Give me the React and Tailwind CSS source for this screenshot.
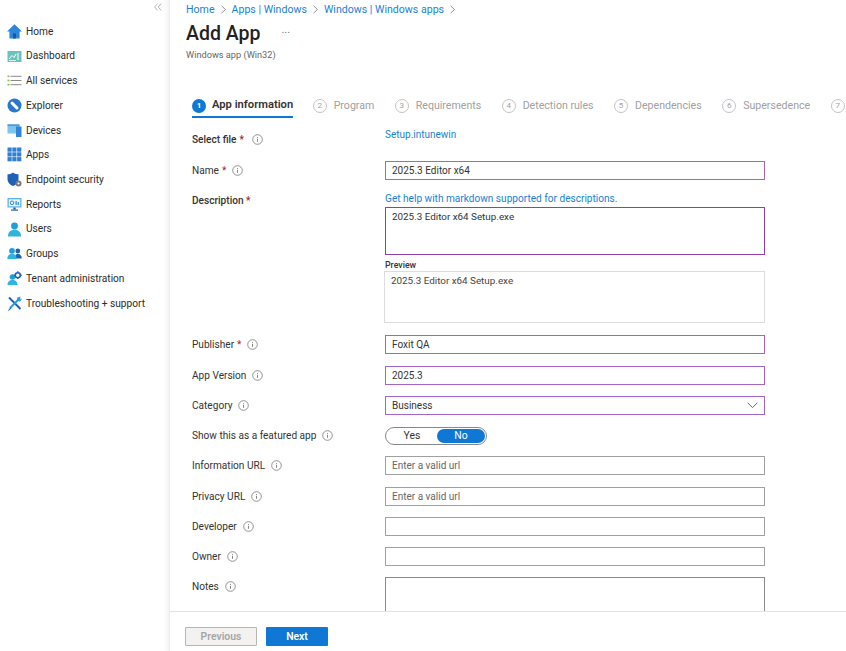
import React from 'react';

const font = { fontFamily: 'Roboto, "Open Sans", sans-serif' };

function HomeIcon() {
  return (
    <svg width="15" height="15" viewBox="0 0 15 15">
      <path d="M7.5 0.3 L0 7.6 H2.4 V14.5 H12.6 V7.6 H15 Z" fill="#2f86d8" />
      <rect x="6" y="9.5" width="3" height="5" fill="#0f5ba8" />
    </svg>
  );
}

function DashboardIcon() {
  return (
    <svg width="15" height="15" viewBox="0 0 15 15">
      <rect x="0.5" y="2" width="14" height="11" fill="#6cc3bd" />
      <path d="M2 10 L5 6.5 L7 8.5 L9 5" stroke="#fff" strokeWidth="1" fill="none" />
      <rect x="10.5" y="4" width="1" height="7" fill="#fff" />
      <rect x="2" y="11" width="7" height="0.8" fill="#fff" />
    </svg>
  );
}

function ServicesIcon() {
  return (
    <svg width="15" height="15" viewBox="0 0 15 15">
      <rect x="0.5" y="2.5" width="2" height="1.6" fill="#8cc04b" />
      <rect x="0.5" y="6.7" width="2" height="1.6" fill="#8cc04b" />
      <rect x="0.5" y="10.9" width="2" height="1.6" fill="#8cc04b" />
      <rect x="3.5" y="2.8" width="11" height="1" fill="#8a8a8a" />
      <rect x="3.5" y="7" width="11" height="1" fill="#8a8a8a" />
      <rect x="3.5" y="11.2" width="11" height="1" fill="#8a8a8a" />
    </svg>
  );
}

function ExplorerIcon() {
  return (
    <svg width="15" height="15" viewBox="0 0 15 15">
      <circle cx="7.5" cy="7.5" r="7" fill="#2b78c9" />
      <path d="M5 5 L10 10" stroke="#fff" strokeWidth="3" strokeLinecap="round" />
    </svg>
  );
}

function DevicesIcon() {
  return (
    <svg width="15" height="15" viewBox="0 0 15 15">
      <rect x="0.5" y="1.5" width="12" height="9" fill="#7fc4ee" />
      <rect x="0.5" y="1.5" width="12" height="1.2" fill="#2f86d8" />
      <rect x="9" y="3.5" width="5.5" height="10.5" fill="#2f86d8" />
    </svg>
  );
}

function AppsIcon() {
  const cells = [0.5, 5.3, 10.1];
  return (
    <svg width="15" height="15" viewBox="0 0 15 15">
      {cells.map((y) =>
        cells.map((x) => <rect key={`${x}-${y}`} x={x} y={y} width="4.2" height="4.2" fill="#2f7fd6" />)
      )}
    </svg>
  );
}

function SecurityIcon() {
  return (
    <svg width="15" height="15" viewBox="0 0 15 15">
      <path d="M6 0.5 C8 2 10 2.2 11.5 2.2 V7.5 C11.5 10.5 9 12.8 6 14 C3 12.8 0.5 10.5 0.5 7.5 V2.2 C2 2.2 4 2 6 0.5 Z" fill="#1f62b5" />
      <circle cx="11.5" cy="11.5" r="3" fill="#7a7a7a" />
      <circle cx="11.5" cy="11.5" r="1" fill="#fff" />
    </svg>
  );
}

function ReportsIcon() {
  return (
    <svg width="15" height="15" viewBox="0 0 15 15">
      <rect x="0.5" y="1" width="14" height="9.5" fill="#5bb4ea" />
      <rect x="1.8" y="2.3" width="11.4" height="7" fill="#e8f5fd" />
      <circle cx="5" cy="5.8" r="1.8" fill="none" stroke="#2f86d8" strokeWidth="1" />
      <rect x="8.5" y="4" width="1.2" height="4" fill="#2f86d8" />
      <rect x="10.6" y="5" width="1.2" height="3" fill="#2f86d8" />
      <rect x="6.3" y="10.5" width="2.4" height="2" fill="#1f62b5" />
      <rect x="4" y="12.5" width="7" height="1.2" fill="#1f62b5" />
    </svg>
  );
}

function UsersIcon() {
  return (
    <svg width="15" height="15" viewBox="0 0 15 15">
      <circle cx="7.5" cy="4" r="3.4" fill="#1f9fd8" />
      <path d="M1 14.5 C1 10 3.5 7.8 7.5 7.8 C11.5 7.8 14 10 14 14.5 Z" fill="#2fb4e0" />
    </svg>
  );
}

function GroupsIcon() {
  return (
    <svg width="15" height="15" viewBox="0 0 15 15">
      <circle cx="10.8" cy="5" r="2.4" fill="#1f62b5" />
      <path d="M7.5 12.5 C7.5 9.5 9 8 11 8 C13 8 14.8 9.5 14.8 12.5 Z" fill="#1f62b5" />
      <circle cx="5" cy="4.8" r="2.9" fill="#1f9fd8" />
      <path d="M0.3 13 C0.3 9.5 2 8 5 8 C8 8 9.7 9.5 9.7 13 Z" fill="#2fb4e0" />
    </svg>
  );
}

function TenantIcon() {
  return (
    <svg width="15" height="15" viewBox="0 0 15 15">
      <circle cx="5.5" cy="6" r="2.8" fill="#1f9fd8" />
      <path d="M0.5 14 C0.5 10.5 2.5 9 5.5 9 C8.5 9 10.5 10.5 10.5 14 Z" fill="#2fb4e0" />
      <circle cx="10.8" cy="4.2" r="2.5" fill="none" stroke="#1f62b5" strokeWidth="1.6" />
      <path d="M10.8 0.3 V1.5 M10.8 7 V8.1 M7 4.2 H8.2 M13.4 4.2 H14.7" stroke="#1f62b5" strokeWidth="1.4" />
    </svg>
  );
}

function ToolsIcon() {
  return (
    <svg width="15" height="15" viewBox="0 0 15 15">
      <path d="M2 1.5 L13.5 13" stroke="#1f62b5" strokeWidth="2" />
      <path d="M13 2 L3 12" stroke="#2f9bdc" strokeWidth="2" />
      <path d="M9.8 3 C10.2 1.2 12 0.3 13.8 0.9 L12 2.8 L13 3.8 L14.6 2.2 C15 4 13.6 5.6 11.8 5.4 Z" fill="#2f9bdc" />
      <path d="M3.5 11.3 L1 14.5 L1.8 14.8 L4.5 12.3 Z" fill="#1f62b5" />
    </svg>
  );
}

function InfoIcon({ className = 'ml-[6px]' }) {
  return (
    <svg width="11" height="11" viewBox="0 0 11 11" className={className}>
      <circle cx="5.5" cy="5.5" r="4.8" fill="none" stroke="#777" strokeWidth="0.8" />
      <rect x="5.1" y="4.8" width="0.8" height="3" fill="#666" />
      <rect x="5.1" y="3.1" width="0.8" height="0.9" fill="#666" />
    </svg>
  );
}

function Chevron() {
  return (
    <svg width="7" height="9" viewBox="0 0 7 9">
      <path d="M1.5 0.8 L5.5 4.5 L1.5 8.2" fill="none" stroke="#777" strokeWidth="0.8" />
    </svg>
  );
}

const navItems = [
  { label: 'Home', icon: <HomeIcon /> },
  { label: 'Dashboard', icon: <DashboardIcon /> },
  { label: 'All services', icon: <ServicesIcon /> },
  { label: 'Explorer', icon: <ExplorerIcon /> },
  { label: 'Devices', icon: <DevicesIcon /> },
  { label: 'Apps', icon: <AppsIcon /> },
  { label: 'Endpoint security', icon: <SecurityIcon /> },
  { label: 'Reports', icon: <ReportsIcon /> },
  { label: 'Users', icon: <UsersIcon /> },
  { label: 'Groups', icon: <GroupsIcon /> },
  { label: 'Tenant administration', icon: <TenantIcon /> },
  { label: 'Troubleshooting + support', icon: <ToolsIcon /> }
];

const steps = [
  { n: 2, label: 'Program' },
  { n: 3, label: 'Requirements' },
  { n: 4, label: 'Detection rules' },
  { n: 5, label: 'Dependencies' },
  { n: 6, label: 'Supersedence' },
  { n: 7, label: '' }
];

function Sidebar() {
  return (
    <aside className="w-[170px] shrink-0 h-full bg-white border-r border-[#ececec] shadow-[inset_-5px_0_5px_-3px_#f1f1f1]">
      <div className="h-[19px] pr-[7px] pt-[3px] flex justify-end items-start">
        <svg width="8" height="8" viewBox="0 0 8 8">
          <path d="M3.6 0.6 L0.6 4 L3.6 7.4 M7.2 0.6 L4.2 4 L7.2 7.4" fill="none" stroke="#a0a0a0" strokeWidth="0.8" />
        </svg>
      </div>
      <nav>
        {navItems.map((item) => (
          <div key={item.label} className="h-[24.73px] pl-[7px] flex items-center gap-[4px] text-[10.15px] text-[#2b2b2b] whitespace-nowrap">
            {item.icon}
            <span>{item.label}</span>
          </div>
        ))}
      </nav>
    </aside>
  );
}

function Row({ label, required, height, children }) {
  return (
    <div className={`flex items-center ${height}`}>
      <div className="w-[193px] shrink-0 flex items-center text-[10.1px] text-[#333]">
        <span>{label}</span>
        {required && <span className="text-[#a4262c] ml-[3px]">*</span>}
        <InfoIcon />
      </div>
      {children}
    </div>
  );
}

function TextBox({ value, placeholder, active }) {
  return (
    <div className={`w-[380px] h-[19px] px-[6px] flex items-center border text-[10px] ${active ? 'border-[#a565c4]' : 'border-[#a0a0a0]'} ${placeholder ? 'text-[#666]' : 'text-[#333]'}`}>
      {value || placeholder}
    </div>
  );
}

function App() {
  return (
    <div className="flex w-[846px] h-[651px] bg-white overflow-hidden" style={font}>
      <Sidebar />
      <main className="flex-1 min-w-0 flex flex-col h-full">
        <div className="pl-[16px] pt-[2px]">
          <div className="h-[15px] flex items-center gap-[5px] text-[10.6px] text-[#1b7fd6]">
            <span>Home</span>
            <Chevron />
            <span>Apps | Windows</span>
            <Chevron />
            <span>Windows | Windows apps</span>
            <Chevron />
          </div>
          <div className="h-[27px] mt-[3px] flex items-center">
            <h1 className="text-[19.5px] font-medium text-[#222]">Add App</h1>
            <span className="ml-[21px] mb-[6px] text-[11px] text-[#777]">...</span>
          </div>
          <div className="mt-[2px] text-[9.2px] leading-[12px] text-[#666]">Windows app (Win32)</div>
        </div>

        <div className="mt-[30px] ml-[22px] h-[27px] flex gap-[20.5px] overflow-hidden text-[10.6px] text-[#a0a0a0] whitespace-nowrap">
          <div className="h-full -mr-[1px] flex items-center gap-[6px] border-b-2 border-[#0f78d4] pt-[4px]">
            <span className="w-[14px] h-[14px] rounded-full bg-[#0f78d4] text-white text-[8px] font-bold flex items-center justify-center">1</span>
            <span className="text-[11.2px] font-semibold text-[#333]">App information</span>
          </div>
          {steps.map((step) => (
            <div key={step.n} className="h-full flex items-center gap-[7px] pt-[2px]">
              <span className="w-[14px] h-[14px] rounded-full border border-[#c4c4c4] text-[8px] flex items-center justify-center">{step.n}</span>
              {step.label && <span>{step.label}</span>}
            </div>
          ))}
        </div>

        <div className="flex-1 min-h-0 overflow-hidden pl-[22px] pt-[14px]">
          <div className="h-[27px] flex items-start">
            <div className="w-[193px] flex items-center text-[10.1px] font-medium text-[#333]">
              <span>Select file</span>
              <span className="text-[#a4262c] ml-[3px]">*</span>
              <InfoIcon className="ml-[8px]" />
            </div>
            <span className="text-[10px] text-[#1b7fd6] -mt-[5px]">Setup.intunewin</span>
          </div>
          <Row label="Name" required height="h-[19px] mt-[2px]">
            <TextBox value="2025.3 Editor x64" active />
          </Row>

          <div className="flex mt-[13px]">
            <div className="w-[193px] shrink-0 text-[10.1px] font-medium text-[#333]">
              Description <span className="text-[#a4262c]">*</span>
            </div>
            <div className="w-[380px]">
              <div className="text-[10.1px] leading-[15px] text-[#1b7fd6] -mt-[2px]">Get help with markdown supported for descriptions.</div>
              <div className="h-[48px] mt-[1px] px-[6px] py-[2px] border border-[#8f3fac] text-[9.85px] leading-[14px] text-[#333]">2025.3 Editor x64 Setup.exe</div>
              <div className="mt-[4px] text-[8.8px] leading-[12px] font-medium text-[#333]">Preview</div>
              <div className="h-[52px] -ml-px px-[6px] py-[2px] border border-[#dcdcdc] text-[9.85px] leading-[14px] text-[#444]">2025.3 Editor x64 Setup.exe</div>
            </div>
          </div>

          <Row label="Publisher" required height="h-[19px] mt-[12px]">
            <TextBox value="Foxit QA" active />
          </Row>
          <Row label="App Version" height="h-[19px] mt-[12px]">
            <TextBox value="2025.3" active />
          </Row>
          <Row label="Category" height="h-[19px] mt-[11px]">
            <div className="w-[380px] h-[19px] px-[6px] flex items-center justify-between border border-[#a565c4] text-[10px] text-[#333]">
              <span>Business</span>
              <svg width="11" height="7" viewBox="0 0 11 7">
                <path d="M0.7 0.8 L5.5 5.6 L10.3 0.8" fill="none" stroke="#555" strokeWidth="0.9" />
              </svg>
            </div>
          </Row>
          <Row label="Show this as a featured app" height="h-[18px] mt-[12px]">
            <div className="w-[102px] h-[18px] p-[1px] flex items-center rounded-full border border-[#888] text-[10.4px]">
              <span className="w-[50px] text-center text-[#333]">Yes</span>
              <span className="flex-1 h-full rounded-full bg-[#0f78d4] text-white flex items-center justify-center">No</span>
            </div>
          </Row>
          <Row label="Information URL" height="h-[19px] mt-[11px]">
            <TextBox placeholder="Enter a valid url" />
          </Row>
          <Row label="Privacy URL" height="h-[19px] mt-[12px]">
            <TextBox placeholder="Enter a valid url" />
          </Row>
          <Row label="Developer" height="h-[19px] mt-[11px]">
            <TextBox />
          </Row>
          <Row label="Owner" height="h-[19px] mt-[11px]">
            <TextBox />
          </Row>
          <div className="flex items-start mt-[11px]">
            <div className="w-[193px] shrink-0 flex items-center text-[10.1px] text-[#333] pt-[2px]">
              <span>Notes</span>
              <InfoIcon />
            </div>
            <div className="w-[380px] h-[48px] border border-[#8a8a8a]" />
          </div>
        </div>

        <div className="h-[40px] shrink-0 border-t border-[#e2e2e2] pl-[15px] pt-[15px] flex items-start gap-[9px] text-[10.4px] font-semibold">
          <button className="w-[72px] h-[19px] bg-[#f3f2f1] border border-[#b5b5b5] text-[#a6a6a6] rounded-[1px]">Previous</button>
          <button className="w-[62px] h-[19px] bg-[#0f78d4] text-white rounded-[1px]">Next</button>
        </div>
      </main>
    </div>
  );
}

export default App;
